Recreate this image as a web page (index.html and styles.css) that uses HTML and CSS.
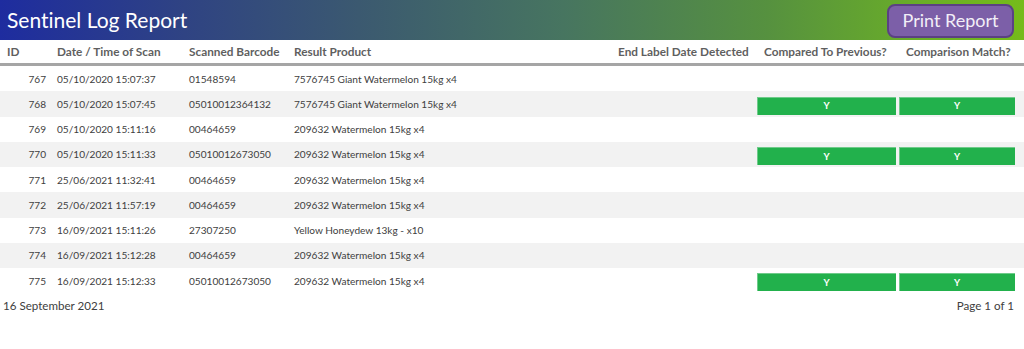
FILE: index.html
```html
<!DOCTYPE html>
<html>
<head>
<meta charset="utf-8">
<link rel="stylesheet" href="styles.css">
</head>
<body>
<div class="titlebar">
  <div class="title">Sentinel Log Report</div>
  <button class="print">Print Report</button>
</div>
<div class="grid head">
  <div class="h id">ID</div>
  <div class="h">Date / Time of Scan</div>
  <div class="h">Scanned Barcode</div>
  <div class="h">Result Product</div>
  <div class="h">End Label Date Detected</div>
  <div class="h pad">Compared To Previous?</div>
  <div class="h pad">Comparison Match?</div>
  <div></div>
</div>
<div class="rows">
  <div class="grid row">
    <div class="c num">767</div><div class="c">05/10/2020 15:07:37</div><div class="c">01548594</div><div class="c">7576745 Giant Watermelon 15kg x4</div><div></div><div></div><div></div><div></div>
  </div>
  <div class="grid row alt">
    <div class="c num">768</div><div class="c">05/10/2020 15:07:45</div><div class="c">05010012364132</div><div class="c">7576745 Giant Watermelon 15kg x4</div><div></div><div class="badge b1">Y</div><div class="badge">Y</div><div></div>
  </div>
  <div class="grid row">
    <div class="c num">769</div><div class="c">05/10/2020 15:11:16</div><div class="c">00464659</div><div class="c">209632 Watermelon 15kg x4</div><div></div><div></div><div></div><div></div>
  </div>
  <div class="grid row alt">
    <div class="c num">770</div><div class="c">05/10/2020 15:11:33</div><div class="c">05010012673050</div><div class="c">209632 Watermelon 15kg x4</div><div></div><div class="badge b1">Y</div><div class="badge">Y</div><div></div>
  </div>
  <div class="grid row">
    <div class="c num">771</div><div class="c">25/06/2021 11:32:41</div><div class="c">00464659</div><div class="c">209632 Watermelon 15kg x4</div><div></div><div></div><div></div><div></div>
  </div>
  <div class="grid row alt">
    <div class="c num">772</div><div class="c">25/06/2021 11:57:19</div><div class="c">00464659</div><div class="c">209632 Watermelon 15kg x4</div><div></div><div></div><div></div><div></div>
  </div>
  <div class="grid row">
    <div class="c num">773</div><div class="c">16/09/2021 15:11:26</div><div class="c">27307250</div><div class="c">Yellow Honeydew 13kg - x10</div><div></div><div></div><div></div><div></div>
  </div>
  <div class="grid row alt">
    <div class="c num">774</div><div class="c">16/09/2021 15:12:28</div><div class="c">00464659</div><div class="c">209632 Watermelon 15kg x4</div><div></div><div></div><div></div><div></div>
  </div>
  <div class="grid row">
    <div class="c num">775</div><div class="c">16/09/2021 15:12:33</div><div class="c">05010012673050</div><div class="c">209632 Watermelon 15kg x4</div><div></div><div class="badge b1">Y</div><div class="badge">Y</div><div></div>
  </div>
</div>
<div class="footer">
  <div>16 September 2021</div>
  <div>Page 1 of 1</div>
</div>
</body>
</html>
```
FILE: styles.css
```css
* { box-sizing: border-box; }
html, body { margin: 0; padding: 0; background: #ffffff; }
body {
  font-family: "Lato", "Open Sans", sans-serif;
  font-variant-ligatures: none;
  color: #404040;
  width: 1024px;
  height: 349px;
  overflow: hidden;
}

.titlebar {
  height: 40px;
  display: flex;
  align-items: center;
  justify-content: space-between;
  padding: 0 10px 0 7px;
  background: linear-gradient(to right, #1e2c9f 0%, #2f4383 18%, #3b5970 35%, #477560 55%, #56913f 75%, #6aae28 90%, #75bb1a 100%);
}
.title { color: #ffffff; font-size: 21px; line-height: 1; padding-bottom: 2px; }
.print {
  font-family: inherit;
  font-variant-ligatures: none;
  width: 127px;
  height: 34px;
  margin-top: 1px;
  background: #7c5fa8;
  border: 2px solid #5b4183;
  border-radius: 8px;
  color: #f2eef7;
  font-size: 18px;
  padding: 0 0 2px 0;
}

.grid {
  display: grid;
  grid-template-columns: 50px 139px 105px 324px 139px 142px 116px 1fr;
}
.head {
  height: 26px;
  align-items: center;
  border-bottom: 3px solid #a5a5a5;
  font-size: 11.8px;
  font-weight: bold;
  color: #5f5f5f;
}
.h { white-space: nowrap; }
.h.id { padding-left: 7px; }
.h.pad { padding-left: 7px; }

.row { height: 25.25px; align-items: center; font-size: 10.1px; }
.row.alt { background: #f2f2f2; }
.c { white-space: nowrap; }
.c.num { text-align: right; padding-right: 4px; }
.grid > div:nth-child(2) { padding-left: 7px; }

.badge {
  align-self: end;
  height: 18px;
  margin-bottom: 2px;
  background: #22b14c;
  box-shadow: inset 1px 1px 0 #6fcb8a;
  color: #ffffff;
  font-weight: bold;
  font-size: 9.5px;
  display: flex;
  align-items: center;
  justify-content: center;
}
.badge.b1 { margin-right: 3px; }

.footer {
  display: flex;
  justify-content: space-between;
  padding: 6px 10px 0 3px;
  font-size: 11.6px;
  color: #404040;
}
```
